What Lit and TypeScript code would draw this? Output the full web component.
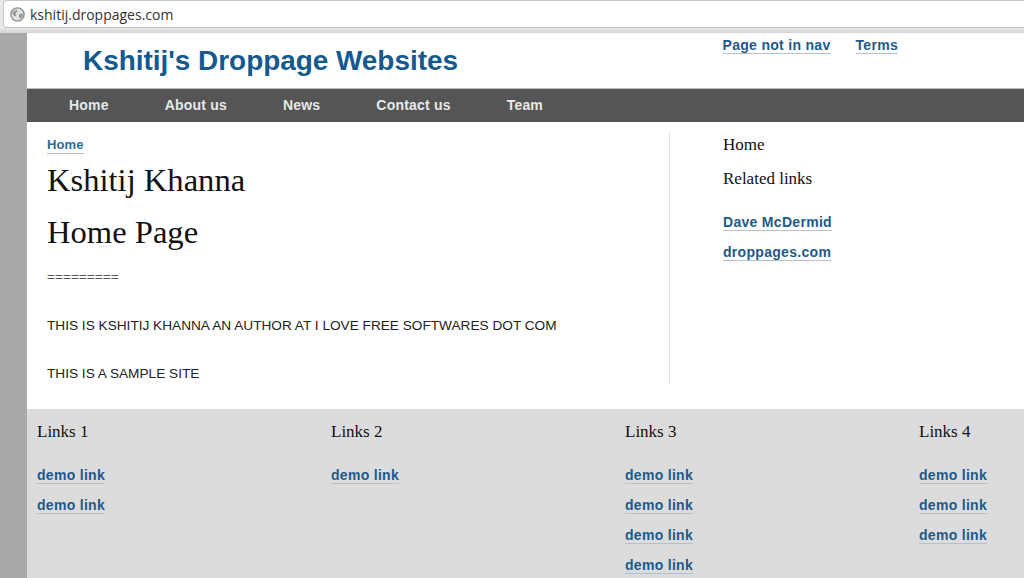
import { LitElement, html, css, svg } from "lit";
import { customElement } from "lit/decorators.js";

const globe = svg`<svg class="globe" width="15" height="15" viewBox="0 0 15 15"><circle cx="7.5" cy="7.5" r="6.6" fill="#e4e4e4" stroke="#8e8e8e" stroke-width="1.4"/><path d="M3 4.5 6.5 2.5 7.5 4.5 5.5 6.5 6.5 8.5 4.5 9.5 2.5 7ZM9 7 12.5 6.5 13 9 10.5 12 9 10Z" fill="#9a9a9a"/></svg>`;

const footer: [string, number][] = [["Links 1", 2], ["Links 2", 1], ["Links 3", 4], ["Links 4", 3]];

@customElement("app-root")
export class AppRoot extends LitElement {
  static styles = css`
    :host { display: block; width: 1024px; height: 578px; overflow: hidden; background: #a9a9a9; font-family: "Liberation Sans", Arial, sans-serif; }
    a { color: #1d5a8c; font-weight: 700; font-size: 14px; letter-spacing: 0.3px; line-height: 16px; text-decoration: none; border-bottom: 1px solid #b4c0cb; display: inline-block; }
    .chrome { height: 28px; box-sizing: border-box; background: #fff; border-top: 1px solid #c8c8c8; border-bottom: 1px solid #c4c4c4; margin-left: 3px; border-left: 1px solid #c8c8c8; border-radius: 4px 0 0 4px; display: flex; align-items: center; padding-left: 6px; gap: 5px; font: 14px "Open Sans", sans-serif; color: #333; }
    .chromewrap { background: #e8e8e8; }
    .strip { height: 5px; background: linear-gradient(#e6e6e6, #d4d4d4); }
    .page { margin-left: 27px; }
    .header { height: 55px; background: #fff; display: flex; justify-content: space-between; }
    h1 { margin: 12px 0 0 56px; font-size: 27.9px; line-height: 31px; color: #14598f; font-weight: 700; }
    .toplinks { display: flex; gap: 25px; margin: 3px 126px 0 0; }
    .nav { height: 34px; background: #555; border-top: 1px solid #bbb; box-sizing: border-box; display: flex; align-items: center; gap: 56px; padding-left: 42px; color: #e8e8e8; font-weight: 700; font-size: 14px; letter-spacing: 0.2px; padding-bottom: 1px; }
    .main { height: 287px; background: #fff; display: flex; box-sizing: border-box; padding-top: 10px; }
    .content { width: 643px; height: 253px; box-sizing: border-box; border-right: 1px solid #e2e2e2; padding: 3px 0 0 20px; }
    .crumb { display: block; height: 25px; }
    .crumb a { font-size: 13px; letter-spacing: 0.1px; color: #2f6b98; }
    h2 { margin: 0; font: 400 32.6px/40px "Liberation Serif", serif; color: #111; }
    h2.second { margin-top: 12px; }
    p { margin: 0; font-size: 13.65px; line-height: 18px; color: #222; }
    .eq { margin-top: 16px; color: #555; }
    .p1 { margin-top: 31px; }
    .p2 { margin-top: 30px; }
    .side { padding: 3px 0 0 53px; font: 17px/20px "Liberation Serif", serif; color: #111; }
    .side .rel { margin-top: 14px; margin-bottom: 25px; }
    .stack { display: flex; flex-direction: column; align-items: flex-start; gap: 13px; font-family: "Liberation Sans", sans-serif; }
    .footer { height: 169px; background: #dcdcdc; display: grid; grid-template-columns: repeat(4, 294px); padding: 13px 0 0 10px; box-sizing: border-box; }
    .footer h3 { margin: 0 0 25px; font: 400 17px/20px "Liberation Serif", serif; color: #111; }
  `;

  render() {
    return html`
      <div class="chromewrap"><div class="chrome">${globe}<span>kshitij.droppages.com</span></div></div>
      <div class="strip"></div>
      <div class="page">
        <div class="header">
          <h1>Kshitij's Droppage Websites</h1>
          <div class="toplinks"><div><a>Page not in nav</a></div><div><a>Terms</a></div></div>
        </div>
        <div class="nav"><span>Home</span><span>About us</span><span>News</span><span>Contact us</span><span>Team</span></div>
        <div class="main">
          <div class="content">
            <div class="crumb"><a>Home</a></div>
            <h2>Kshitij Khanna</h2>
            <h2 class="second">Home Page</h2>
            <p class="eq">=========</p>
            <p class="p1">THIS IS KSHITIJ KHANNA AN AUTHOR AT I LOVE FREE SOFTWARES DOT COM</p>
            <p class="p2">THIS IS A SAMPLE SITE</p>
          </div>
          <div class="side">
            <div>Home</div>
            <div class="rel">Related links</div>
            <div class="stack"><a>Dave McDermid</a><a>droppages.com</a></div>
          </div>
        </div>
        <div class="footer">
          ${footer.map(([t, n]) => html`<div><h3>${t}</h3><div class="stack">${Array.from({ length: n }, () => html`<a>demo link</a>`)}</div></div>`)}
        </div>
      </div>
    `;
  }
}
